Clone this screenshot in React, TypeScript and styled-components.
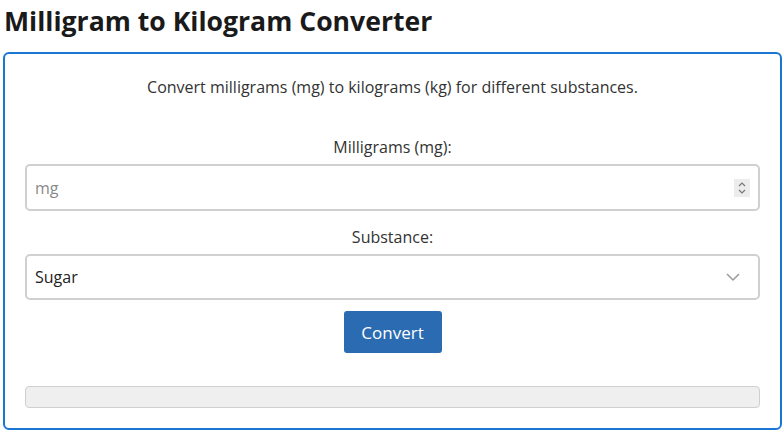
import { createGlobalStyle } from "styled-components";
import styled from "styled-components";

const GlobalStyle = createGlobalStyle`
  body {
    margin: 0;
    font-family: "Open Sans", "Noto Sans", sans-serif;
    background: #fff;
    color: #333;
  }
`;

const Page = styled.div`
  padding: 0 2px 0 3px;
`;

const Title = styled.h1`
  margin: 0;
  padding: 3px 0 0 1px;
  height: 52px;
  box-sizing: border-box;
  font-size: 26.6px;
  line-height: 36px;
  font-weight: 700;
  color: #1a1a1a;
`;

const Card = styled.div`
  border: 2px solid #1976d2;
  border-radius: 6px;
  padding: 22px 20px 20px;
  display: flex;
  flex-direction: column;
  align-items: center;
  height: 378px;
  box-sizing: border-box;
`;

const Intro = styled.p`
  margin: 0 0 38px;
  font-size: 16px;
  line-height: 22px;
  color: #333;
`;

const Label = styled.label`
  font-size: 16px;
  line-height: 22px;
  color: #333;
  margin-bottom: 6px;
`;

const Field = styled.div<{ $h: number; $gap: number }>`
  width: 100%;
  height: ${({ $h }) => $h}px;
  box-sizing: border-box;
  border: 2px solid #d0d0d0;
  border-radius: 5px;
  display: flex;
  align-items: center;
  padding: 0 8px 0 8px;
  margin-bottom: ${({ $gap }) => $gap}px;
`;

const FieldText = styled.span<{ $muted?: boolean }>`
  flex: 1;
  font-size: 16px;
  color: ${({ $muted }) => ($muted ? "#8a8a8a" : "#222")};
`;

const Spinner = styled.div`
  width: 16px;
  height: 18px;
  background: #ececec;
  display: flex;
  align-items: center;
  justify-content: center;
`;

const Chevron = styled.svg`
  margin-right: 9px;
`;

const ConvertButton = styled.button`
  background: #2a6bb1;
  color: #fff;
  border: none;
  border-radius: 3px;
  width: 98px;
  height: 42px;
  font-family: inherit;
  font-size: 17px;
  margin-top: -5px;
  cursor: pointer;
`;

const Result = styled.div`
  width: 100%;
  height: 22px;
  box-sizing: border-box;
  margin-top: 33px;
  background: #efefef;
  border: 1px solid #cfcfcf;
  border-radius: 4px;
`;

export default function App() {
  return (
    <>
      <GlobalStyle />
      <Page>
        <Title>Milligram to Kilogram Converter</Title>
        <Card>
          <Intro>Convert milligrams (mg) to kilograms (kg) for different substances.</Intro>
          <Label>Milligrams (mg):</Label>
          <Field $h={47} $gap={15}>
            <FieldText $muted>mg</FieldText>
            <Spinner>
              <svg width="10" height="14" viewBox="0 0 10 14" fill="none" stroke="#777" strokeWidth="1.2">
                <path d="M2 5 L5 2 L8 5" />
                <path d="M2 9 L5 12 L8 9" />
              </svg>
            </Spinner>
          </Field>
          <Label>Substance:</Label>
          <Field $h={46} $gap={16}>
            <FieldText>Sugar</FieldText>
            <Chevron width="16" height="10" viewBox="0 0 16 10" fill="none" stroke="#9a9a9a" strokeWidth="1.5">
              <path d="M2 2 L8 8 L14 2" />
            </Chevron>
          </Field>
          <ConvertButton>Convert</ConvertButton>
          <Result />
        </Card>
      </Page>
    </>
  );
}
